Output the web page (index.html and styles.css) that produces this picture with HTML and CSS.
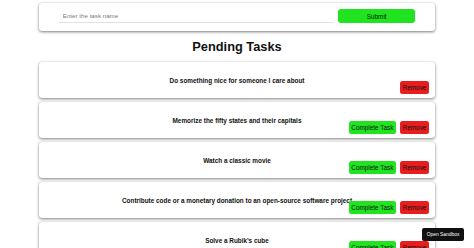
FILE: index.html
```html
<!DOCTYPE html>
<html lang="en">
<head>
<meta charset="utf-8">
<title>Pending Tasks</title>
<link rel="stylesheet" href="styles.css">
</head>
<body>
<div class="container">
  <div class="form-card">
    <form class="task-form">
      <input class="task-input" type="text" placeholder="Enter the task name">
      <button class="submit-btn" type="button">Submit</button>
    </form>
  </div>
  <h1 class="title">Pending Tasks</h1>
  <div class="task-list">
    <div class="task">
      <p class="task-name">Do something nice for someone I care about</p>
      <div class="actions">
        <button class="btn btn-remove" type="button">Remove</button>
      </div>
    </div>
    <div class="task">
      <p class="task-name">Memorize the fifty states and their capitals</p>
      <div class="actions">
        <button class="btn btn-complete" type="button">Complete Task</button>
        <button class="btn btn-remove" type="button">Remove</button>
      </div>
    </div>
    <div class="task">
      <p class="task-name">Watch a classic movie</p>
      <div class="actions">
        <button class="btn btn-complete" type="button">Complete Task</button>
        <button class="btn btn-remove" type="button">Remove</button>
      </div>
    </div>
    <div class="task">
      <p class="task-name">Contribute code or a monetary donation to an open-source software project</p>
      <div class="actions">
        <button class="btn btn-complete" type="button">Complete Task</button>
        <button class="btn btn-remove" type="button">Remove</button>
      </div>
    </div>
    <div class="task">
      <p class="task-name">Solve a Rubik’s cube</p>
      <div class="actions">
        <button class="btn btn-complete" type="button">Complete Task</button>
        <button class="btn btn-remove" type="button">Remove</button>
      </div>
    </div>
  </div>
</div>
<div class="sandbox-tip">Open Sandbox</div>
</body>
</html>
```
FILE: styles.css
```css
html, body {
  margin: 0;
  padding: 0;
  background: #ffffff;
  font-family: "Liberation Sans", Arial, sans-serif;
  color: #111111;
}

body {
  padding-top: 3.3px;
}

.container {
  width: 396px;
  margin: 0 auto;
}

.form-card {
  background: #ffffff;
  border-radius: 3px;
  box-shadow: 0 1px 3px rgba(0, 0, 0, 0.5), 0 0 1px rgba(0, 0, 0, 0.15);
  padding: 6px 0 7.4px;
}

.task-form {
  width: 90%;
  margin: 0 auto;
  display: flex;
  align-items: center;
  gap: 4px;
}

.task-input {
  flex: 1;
  min-width: 0;
  height: 14px;
  box-sizing: border-box;
  border: none;
  border-bottom: 1px solid #e2e2e2;
  padding: 0 4px;
  font-family: "Liberation Sans", Arial, sans-serif;
  font-size: 6.2px;
  color: #111;
  outline: none;
  background: transparent;
}

.task-input::placeholder {
  color: #7a7a7a;
}

.submit-btn {
  width: 77px;
  height: 14px;
  border: none;
  border-radius: 3px;
  background: #1fe41f;
  color: #111;
  font-family: "Liberation Sans", Arial, sans-serif;
  font-size: 6.4px;
  padding: 0;
}

.title {
  margin: 8.8px 0 7.9px;
  text-align: center;
  font-size: 12.8px;
  font-weight: bold;
  line-height: normal;
  color: #111;
}

.task-list {
  display: flex;
  flex-direction: column;
  gap: 4px;
}

.task {
  height: 36px;
  box-sizing: border-box;
  padding: 4.5px 6px;
  display: grid;
  background: #ffffff;
  border-radius: 3px;
  box-shadow: 0 1px 3px rgba(0, 0, 0, 0.5), 0 0 1px rgba(0, 0, 0, 0.15);
}

.task > * {
  grid-area: 1 / 1;
}

.task-name {
  margin: 0;
  align-self: center;
  text-align: center;
  font-size: 6.4px;
  font-weight: bold;
  line-height: normal;
  color: #111;
}

.actions {
  align-self: end;
  justify-self: end;
  display: flex;
  gap: 4px;
}

.btn {
  height: 13px;
  border: none;
  border-radius: 2.5px;
  padding: 0 2.6px;
  font-family: "Liberation Sans", Arial, sans-serif;
  font-size: 6.4px;
  color: #111;
}

.btn-complete {
  background: #1fe41f;
}

.btn-remove {
  background: #e81e1e;
}

.sandbox-tip {
  position: fixed;
  right: 10px;
  bottom: 7.3px;
  background: #111111;
  color: #ffffff;
  font-size: 4.9px;
  line-height: 5.7px;
  padding: 3.5px 4.6px;
  border-radius: 2px;
}
```
